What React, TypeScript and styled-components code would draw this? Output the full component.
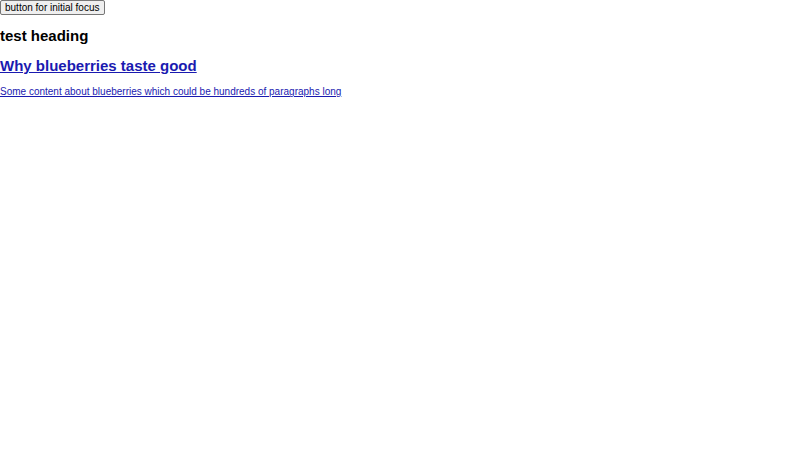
import styled, { createGlobalStyle } from "styled-components";

const GlobalStyle = createGlobalStyle`
  html {
    font-size: 10px;
  }
  body {
    margin: 0;
    font-family: "Liberation Sans", Arial, sans-serif;
    background: #ffffff;
    color: #000000;
  }
`;

const FocusButton = styled.button`
  font-family: "Liberation Sans", Arial, sans-serif;
  font-size: 10px;
  margin: 0;
  padding: 1px 4px;
  color: #000;
  background: #efefef;
  border: 1px solid #767676;
  border-radius: 2px;
`;

const Heading = styled.h2`
  font-size: 15px;
  font-weight: bold;
  margin: 12.45px 0;
`;

const ArticleLink = styled.a`
  color: #1a1ab0;
  text-decoration: underline;
  display: block;
`;

const Content = styled.p`
  font-size: 10px;
  margin: 10px 0;
`;

export default function App() {
  return (
    <>
      <GlobalStyle />
      <FocusButton>button for initial focus</FocusButton>
      <Heading>test heading</Heading>
      <ArticleLink href="#">
        <Heading>Why blueberries taste good</Heading>
        <Content>
          Some content about blueberries which could be hundreds of paragraphs
          long
        </Content>
      </ArticleLink>
    </>
  );
}
